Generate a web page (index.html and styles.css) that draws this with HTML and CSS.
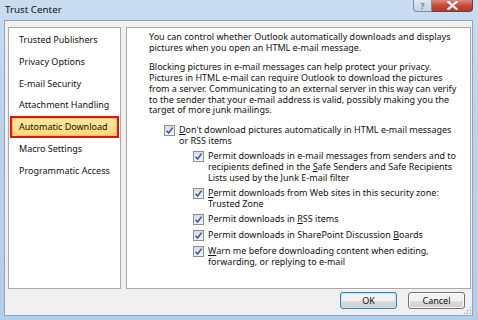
FILE: index.html
```html
<!DOCTYPE html>
<html lang="en">
<head>
<meta charset="UTF-8">
<title>Trust Center</title>
<link rel="stylesheet" href="styles.css">
</head>
<body>
<div class="window">
  <div class="titlebar">
    <span class="title">Trust Center</span>
    <div class="caption-buttons">
      <span class="cap-help">?</span>
      <span class="cap-close">
        <svg width="11" height="9" viewBox="0 0 11 9"><path d="M1.5 1 L9.5 8 M9.5 1 L1.5 8" stroke="#fff" stroke-width="2.2" stroke-linecap="square"/></svg>
      </span>
    </div>
  </div>

  <div class="client">
    <div class="panes">
      <ul class="nav">
        <li>Trusted Publishers</li>
        <li>Privacy Options</li>
        <li>E-mail Security</li>
        <li>Attachment Handling</li>
        <li class="selected">Automatic Download</li>
        <li>Macro Settings</li>
        <li>Programmatic Access</li>
      </ul>

      <div class="content">
        <div class="inner">
          <p>You can control whether Outlook automatically downloads and displays<br>pictures when you open an HTML e-mail message.</p>
          <p>Blocking pictures in e-mail messages can help protect your privacy.<br>Pictures in HTML e-mail can require Outlook to download the pictures<br>from a server. Communicating to an external server in this way can verify<br>to the sender that your e-mail address is valid, possibly making you the<br>target of more junk mailings.</p>

          <div class="option">
            <span class="check"><svg width="9" height="9" viewBox="0 0 9 9"><path d="M1.5 4.8 L3.6 7 L7.6 1.6" fill="none" stroke="#2f56a8" stroke-width="1.5"/></svg></span>
            <span class="label"><u>D</u>on't download pictures automatically in HTML e-mail messages<br>or RSS items</span>
          </div>

          <div class="sub-options">
            <div class="option">
              <span class="check"><svg width="9" height="9" viewBox="0 0 9 9"><path d="M1.5 4.8 L3.6 7 L7.6 1.6" fill="none" stroke="#2f56a8" stroke-width="1.5"/></svg></span>
              <span class="label">Permit downloads in e-mail messages from senders and to<br>recipients defined in the <u>S</u>afe Senders and Safe Recipients<br>Lists used by the Junk E-mail filter</span>
            </div>
            <div class="option">
              <span class="check"><svg width="9" height="9" viewBox="0 0 9 9"><path d="M1.5 4.8 L3.6 7 L7.6 1.6" fill="none" stroke="#2f56a8" stroke-width="1.5"/></svg></span>
              <span class="label"><u>P</u>ermit downloads from Web sites in this security zone:<br>Trusted Zone</span>
            </div>
            <div class="option">
              <span class="check"><svg width="9" height="9" viewBox="0 0 9 9"><path d="M1.5 4.8 L3.6 7 L7.6 1.6" fill="none" stroke="#2f56a8" stroke-width="1.5"/></svg></span>
              <span class="label">Permit downloads in <u>R</u>SS items</span>
            </div>
            <div class="option">
              <span class="check"><svg width="9" height="9" viewBox="0 0 9 9"><path d="M1.5 4.8 L3.6 7 L7.6 1.6" fill="none" stroke="#2f56a8" stroke-width="1.5"/></svg></span>
              <span class="label">Permit downloads in SharePoint Discussion <u>B</u>oards</span>
            </div>
            <div class="option">
              <span class="check"><svg width="9" height="9" viewBox="0 0 9 9"><path d="M1.5 4.8 L3.6 7 L7.6 1.6" fill="none" stroke="#2f56a8" stroke-width="1.5"/></svg></span>
              <span class="label"><u>W</u>arn me before downloading content when editing,<br>forwarding, or replying to e-mail</span>
            </div>
          </div>
        </div>
      </div>
    </div>

    <div class="footer">
      <button class="btn default">OK</button>
      <button class="btn">Cancel</button>
    </div>
    <span class="grip"></span>
  </div>
</div>
</body>
</html>
```

FILE: styles.css
```css
body {
  margin: 0;
  width: 478px;
  height: 320px;
  overflow: hidden;
  font-family: "Noto Sans", "Open Sans", sans-serif;
  font-size: 9px;
  color: #111;
  background: #c2d7ee;
}

.window {
  display: flex;
  flex-direction: column;
  height: 320px;
  box-sizing: border-box;
  padding: 0 5px 4px 4px;
  background: linear-gradient(#c9dcf1, #bcd2eb 40%, #b6cde8);
}

.titlebar {
  height: 20px;
  display: flex;
  justify-content: space-between;
  align-items: flex-start;
}

.title {
  padding: 3px 0 0 1px;
  font-size: 9.8px;
  color: #111;
}

.caption-buttons {
  display: flex;
  height: 13px;
}

.cap-help {
  width: 19px;
  height: 12px;
  box-sizing: border-box;
  border: 1px solid #7b8ea6;
  border-top: none;
  border-radius: 0 0 0 4px;
  background: linear-gradient(#dfe8f3, #c3d2e4);
  color: #6d8099;
  font-size: 9px;
  font-weight: bold;
  line-height: 11px;
  text-align: center;
}

.cap-close {
  width: 41px;
  height: 12px;
  box-sizing: border-box;
  border: 1px solid #7b3a33;
  border-top: none;
  border-left: none;
  border-radius: 0 0 4px 0;
  background: linear-gradient(#dd8a7e, #c7493a 50%, #bd3526);
  display: flex;
  justify-content: center;
  align-items: center;
}

.client {
  position: relative;
  flex: 1;
  display: flex;
  flex-direction: column;
  background: #f0f0f0;
  border: 1px solid #8ca5c4;
  padding: 6px 3px 0 3px;
}

.panes {
  display: flex;
  gap: 5px;
  height: 262px;
}

.nav {
  list-style: none;
  margin: 0;
  padding: 1px 1px 0 1px;
  width: 109px;
  flex: none;
  background: #fff;
  border: 1px solid #a9a9a9;
}

.nav li {
  height: 21.8px;
  box-sizing: border-box;
  padding-left: 9px;
  line-height: 21.8px;
  white-space: nowrap;
}

.nav li.selected {
  border: 2px solid #e8100c;
  padding-left: 7px;
  line-height: 17.8px;
  background: linear-gradient(#fde8a4, #fbd876);
  box-shadow: inset 0 0 0 1px #f6c766;
}

.content {
  flex: 1;
  background: #fff;
  border: 1px solid #a9a9a9;
}

.inner {
  margin: 4px 14px 0 22px;
  white-space: nowrap;
  line-height: 10.9px;
}

.inner p {
  margin: 0 0 8px;
}

.option {
  display: flex;
  gap: 4px;
  margin-top: 4px;
  min-height: 12px;
}

.inner > .option {
  margin-left: 15px;
  margin-top: 9px;
}

.sub-options {
  margin-left: 44px;
}

.check {
  flex: none;
  width: 11px;
  height: 11px;
  box-sizing: border-box;
  border: 1px solid #8f8f8f;
  background: linear-gradient(#dcdcdc, #f4f4f4);
  display: flex;
  justify-content: center;
  align-items: center;
}

.label u {
  text-decoration-thickness: 1px;
  text-underline-offset: 1px;
}

.footer {
  display: flex;
  justify-content: flex-end;
  gap: 11px;
  padding: 3px 4px 0 0;
}

.btn {
  width: 57px;
  height: 17px;
  padding: 0;
  font-family: inherit;
  font-size: 9px;
  color: #111;
  border: 1px solid #707070;
  border-radius: 3px;
  background: linear-gradient(#f2f2f2 50%, #dddddd 50%, #cfcfcf);
  box-shadow: inset 0 0 0 1px #fbfbfb;
}

.btn.default {
  border-color: #3c7fb1;
  box-shadow: inset 0 0 0 1px #c4e3f8;
}

.grip {
  position: absolute;
  right: 1px;
  bottom: 1px;
  width: 8px;
  height: 8px;
  background: radial-gradient(circle, #b7b7b7 0.8px, transparent 1.2px) 0 0 / 3px 3px;
  clip-path: polygon(100% 0, 100% 100%, 0 100%);
}
```
